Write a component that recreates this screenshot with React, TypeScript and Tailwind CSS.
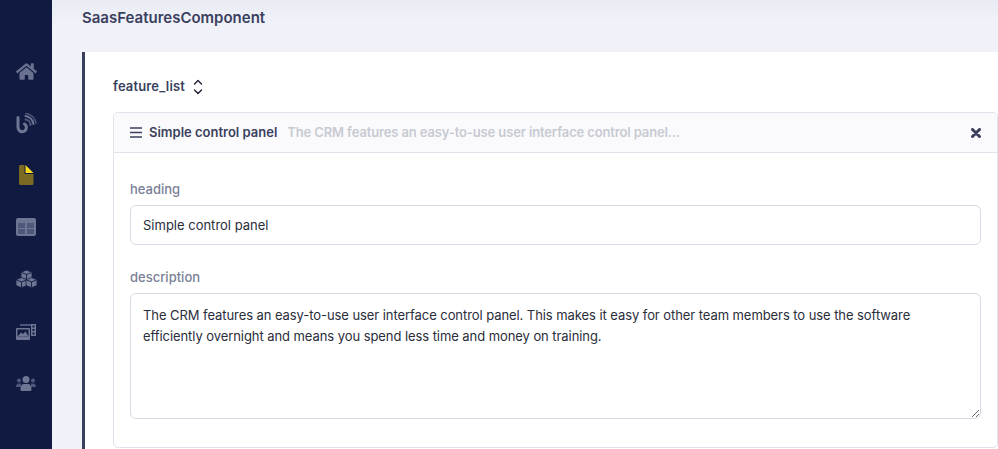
import React from "react";
import { FaHome } from "react-icons/fa";

const font = "font-['Inter','Liberation_Sans',sans-serif]";
const light = "#6f7694";
const dark = "#4f587b";

function BlogIcon() {
  return (
    <svg width="21" height="21" viewBox="0 0 21 21" fill="none" stroke={light}>
      <path d="M2 4.5 V14.5 a4.2 4.2 0 1 0 6.5 -3.5" strokeWidth="3" strokeLinecap="round" />
      <path d="M9.5 6.5 a5.5 5.5 0 0 1 5 5.5" strokeWidth="2" strokeLinecap="round" stroke={dark} />
      <path d="M9.5 3 a9 9 0 0 1 8 8" strokeWidth="2" strokeLinecap="round" />
      <path d="M10 0.5 a12 12 0 0 1 10 9.5" strokeWidth="1.6" strokeLinecap="round" stroke={dark} />
    </svg>
  );
}

function PageIcon() {
  return (
    <svg width="15" height="20" viewBox="0 0 15 20">
      <path d="M1.5 0 H5.5 V8 Q5.5 9 6.5 9 H14.5 V18.5 Q14.5 20 13 20 H1.5 Q0 20 0 18.5 V1.5 Q0 0 1.5 0 Z" fill="#7a6a24" />
      <path d="M6.5 0 L14.5 8 H6.5 Z" fill="#fbd91e" />
    </svg>
  );
}

function TableIcon() {
  return (
    <svg width="20" height="18" viewBox="0 0 20 18">
      <rect width="20" height="18" rx="2" fill={light} />
      <rect x="2" y="5" width="7" height="5" fill={dark} />
      <rect x="11" y="5" width="7" height="5" fill={dark} />
      <rect x="2" y="11" width="7" height="5" fill={dark} />
      <rect x="11" y="11" width="7" height="5" fill={dark} />
    </svg>
  );
}

function Cube({ x, y }: { x: number; y: number }) {
  return (
    <g transform={`translate(${x} ${y})`}>
      <path d="M5.5 0 L11 2.2 V8 L5.5 10.2 L0 8 V2.2 Z" fill={light} stroke="#111b42" strokeWidth="0.8" />
      <path d="M5.5 4.4 V10 M0.6 2.6 L5.5 4.4 L10.4 2.6" fill="none" stroke="#111b42" strokeWidth="0.9" />
    </g>
  );
}

function CubesIcon() {
  return (
    <svg width="21" height="18" viewBox="0 0 21 18">
      <Cube x={5} y={0} />
      <Cube x={0} y={7.5} />
      <Cube x={10} y={7.5} />
    </svg>
  );
}

function PhotoIcon() {
  return (
    <svg width="20" height="17" viewBox="0 0 20 17">
      <path d="M4 1 H20 V13 H15 V12 H18 V3 H4 Z" fill={dark} />
      <rect x="15" y="1" width="5" height="12" fill={light} />
      <rect x="16.5" y="2.5" width="2" height="2" fill="#111b42" />
      <rect x="16.5" y="6" width="2" height="2" fill="#111b42" />
      <rect x="16.5" y="9.5" width="2" height="2" fill="#111b42" />
      <rect x="0" y="5" width="14" height="12" rx="1" fill={light} />
      <rect x="1.5" y="6.5" width="11" height="7" fill="#111b42" />
      <path d="M1.5 13.5 L5 9.5 L7 11 L9.5 8.5 L12.5 13.5 Z" fill={light} />
    </svg>
  );
}

function UsersIcon() {
  return (
    <svg width="20" height="15" viewBox="0 0 20 15">
      <circle cx="3" cy="4.5" r="2" fill={dark} />
      <circle cx="17" cy="4.5" r="2" fill={dark} />
      <path d="M0 11 Q0 7.5 3 7.5 H5 V11 Z M20 11 Q20 7.5 17 7.5 H15 V11 Z" fill={dark} />
      <circle cx="10" cy="3.5" r="3.5" fill={light} />
      <path d="M4.5 13.5 Q4.5 8 8 8 H12 Q15.5 8 15.5 13.5 Q15.5 15 14 15 H6 Q4.5 15 4.5 13.5 Z" fill={light} />
    </svg>
  );
}

function Chevrons() {
  return (
    <svg width="10" height="16" viewBox="0 0 10 16" fill="none" stroke="#1c2033" strokeWidth="1.4" strokeLinecap="round" strokeLinejoin="round">
      <path d="M1.5 5 L5 1.5 L8.5 5" />
      <path d="M1.5 11 L5 14.5 L8.5 11" />
    </svg>
  );
}

function Menu() {
  return (
    <svg width="12" height="11" viewBox="0 0 12 11" stroke="#3a3f5e" strokeWidth="1.6">
      <path d="M0 1 H12 M0 5.5 H12 M0 10 H12" />
    </svg>
  );
}

function Close() {
  return (
    <svg width="10" height="10" viewBox="0 0 10 10" stroke="#3a3f5e" strokeWidth="3" strokeLinecap="round" className="ml-auto">
      <path d="M1.5 1.5 L8.5 8.5 M8.5 1.5 L1.5 8.5" />
    </svg>
  );
}

const slots = "flex h-5 items-center justify-center";

export default function App() {
  return (
    <div className={`flex h-[449px] w-[998px] overflow-hidden bg-[#f1f2f9] ${font}`}>
      <aside className="flex h-full w-[52px] shrink-0 flex-col items-center gap-8 bg-[#111b42] pt-[61px] text-[#6a7190]">
        <div className={slots}><FaHome size={21} /></div>
        <div className={slots}><BlogIcon /></div>
        <div className={slots}><PageIcon /></div>
        <div className={slots}><TableIcon /></div>
        <div className={slots}><CubesIcon /></div>
        <div className={slots}><PhotoIcon /></div>
        <div className={slots}><UsersIcon /></div>
      </aside>
      <main className="flex min-w-0 flex-1 flex-col bg-gradient-to-b from-[#e9ebf4] to-[#f1f2f9] to-[24px]">
        <div className="flex h-[52px] shrink-0 items-start pl-[30px] pt-[9px] text-[15px] leading-[18px] font-semibold text-[#3a3f5e]">
          SaasFeaturesComponent
        </div>
        <section className="ml-[30px] flex-1 border-l-[3px] border-[#3a3f5e] bg-white pl-[28px] pt-[26px]">
          <div className="flex h-[18px] items-center gap-2 text-[13px] font-semibold tracking-[0.15px] text-[#3a3f5e]">
            feature_list <Chevrons />
          </div>
          <div className="mt-[16px] h-[336px] rounded-[5px] border border-[#e0e2ec]">
            <div className="flex h-[40px] items-center rounded-t-[5px] border-b border-[#e0e2ec] bg-[#fafafd] pl-4 pr-[16px] text-[13px]">
              <Menu />
              <span className="ml-[7px] font-semibold text-[#3a3f5e]">Simple control panel</span>
              <span className="ml-[10px] font-semibold tracking-[-0.13px] text-[#c8cad2]">The CRM features an easy-to-use user interface control panel...</span>
              <Close />
            </div>
            <div className="pl-4 pr-[16px] pt-[27px]">
              <label className="block text-[13px] leading-[18px] font-medium text-[#7a7f97]">heading</label>
              <input readOnly value="Simple control panel" className="mt-[7px] block h-[40px] w-full rounded-[6px] border border-[#d9dae5] px-3 text-[13px] text-[#2a2d3a] outline-none" />
              <label className="mt-[23px] block text-[13px] leading-[18px] font-medium text-[#7a7f97]">description</label>
              <textarea readOnly value="The CRM features an easy-to-use user interface control panel. This makes it easy for other team members to use the software efficiently overnight and means you spend less time and money on training." className={`mt-[7px] block h-[126px] w-full rounded-[6px] border border-[#d9dae5] px-3 py-[11px] text-[13px] leading-[21px] tracking-[-0.07px] text-[#2a2d3a] outline-none ${font}`} />
            </div>
          </div>
        </section>
      </main>
    </div>
  );
}
